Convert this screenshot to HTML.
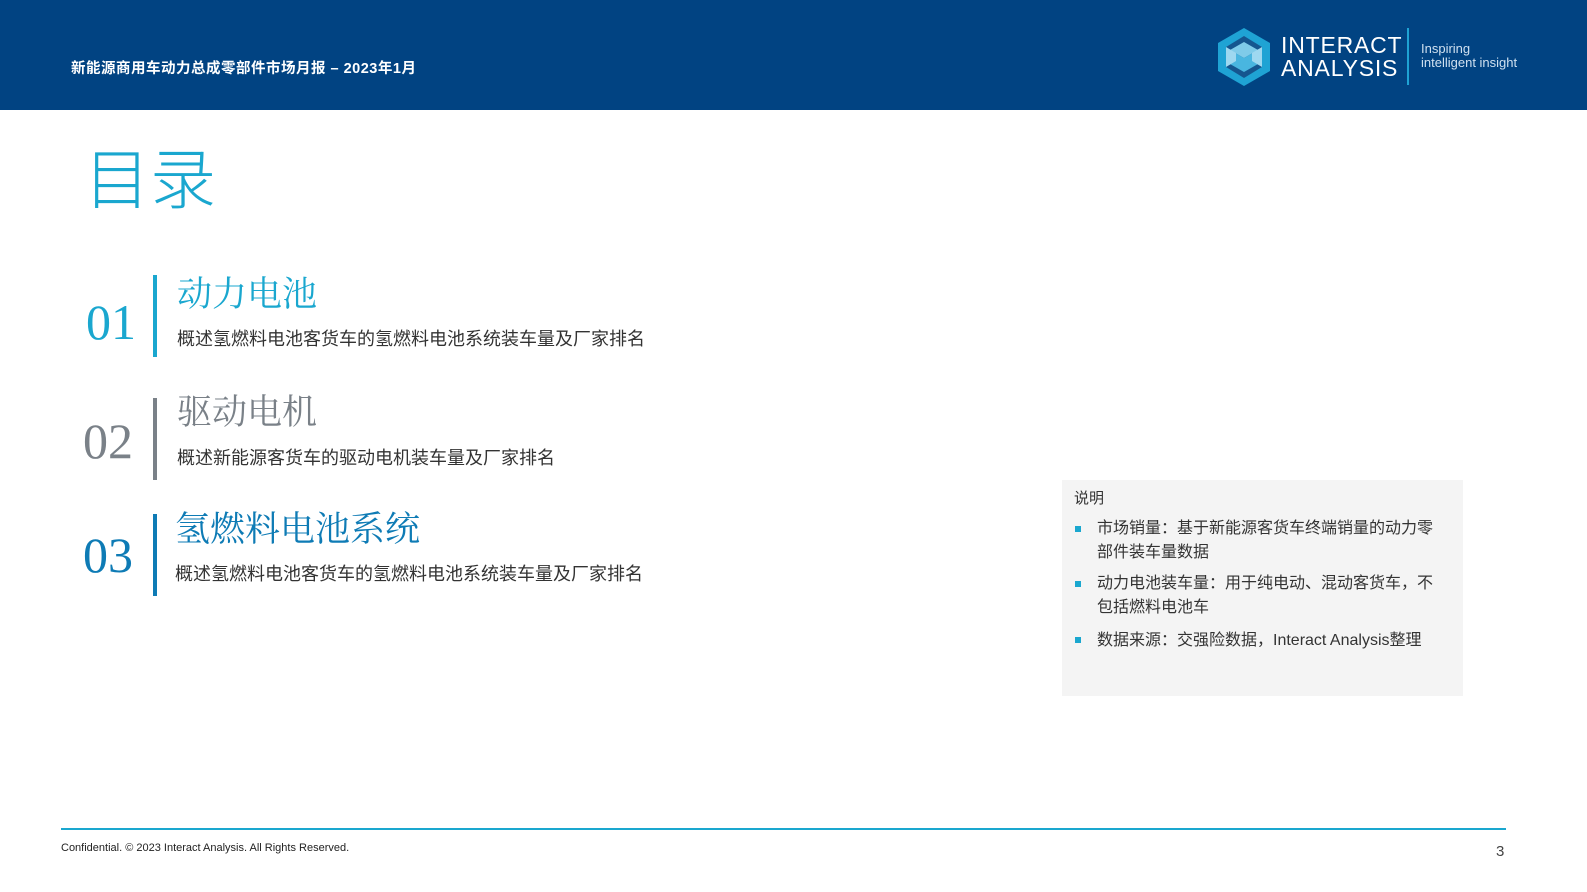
<!DOCTYPE html>
<html><head><meta charset="utf-8"><style>
*{margin:0;padding:0;box-sizing:border-box}
body{width:1587px;height:892px;background:#fff;position:relative;overflow:hidden;font-family:"Liberation Sans","Noto Sans CJK SC",sans-serif}
.hdr{position:absolute;left:0;top:0;width:1587px;height:110px;background:#014382}
.ht{position:absolute;left:71px;top:57px;color:#fff;font-size:14.5px;font-weight:bold;letter-spacing:0.5px}
.abs{position:absolute}
.num{position:absolute;font-family:"Liberation Serif","Noto Serif CJK SC",serif;font-size:50px;line-height:1}
.bar{position:absolute;width:4px;height:82px}
.tt{position:absolute;font-family:"Noto Serif CJK SC",serif;font-size:35px;line-height:1}
.ds{position:absolute;font-size:18px;color:#333;line-height:1}
.note{position:absolute;left:1062px;top:480px;width:401px;height:216px;background:#f4f4f4}
.note p{position:absolute;font-size:16px;color:#333;line-height:24px}
.sq{position:absolute;width:6px;height:6px;background:#1aa7cf}
</style></head><body>
<div class="hdr">
<div class="ht">新能源商用车动力总成零部件市场月报 – 2023年1月</div>
<svg class="abs" style="left:1218px;top:28px" width="52" height="58" viewBox="0 0 52 58">
<polygon points="26,0 52,15 52,43 26,58 0,43 0,15" fill="#1fa3d4"/>
<polygon points="26,8 44,19 44,39 26,50 8,39 8,19" fill="#15568f"/>
<polygon points="26,14 40,22 26,30 12,22" fill="#7fcbe9"/>
<polygon points="26,30 40,22 40,36 26,44 12,36 12,22" fill="#49b6e0"/>
<polygon points="8,19 18,25 18,33 8,39" fill="#9ed8f0"/>
<polygon points="44,19 34,25 34,33 44,39" fill="#9ed8f0"/>
</svg>
<div class="abs" style="left:1281px;top:34px;color:#fff;font-size:23px;line-height:23px;letter-spacing:0.8px">INTERACT<br>ANALYSIS</div>
<div class="abs" style="left:1407px;top:28px;width:2px;height:57px;background:#1fa3d4"></div>
<div class="abs" style="left:1421px;top:42px;color:#cfe0f0;font-size:13px;line-height:14px">Inspiring<br>intelligent insight</div>
</div>
<div class="abs" style="left:84px;top:142px;font-size:66px;color:#1aa7cf;font-family:'Noto Sans CJK SC',sans-serif;font-weight:300;line-height:1">目录</div>

<div class="num" style="left:86px;top:297px;color:#1aa7cf">01</div>
<div class="bar" style="left:153px;top:275px;background:#1aa7cf"></div>
<div class="tt" style="left:177px;top:275px;color:#1aa7cf">动力电池</div>
<div class="ds" style="left:177px;top:330px">概述氢燃料电池客货车的氢燃料电池系统装车量及厂家排名</div>

<div class="num" style="left:83px;top:416px;color:#7a8188">02</div>
<div class="bar" style="left:153px;top:398px;background:#7a8188"></div>
<div class="tt" style="left:177px;top:393px;color:#7a8188">驱动电机</div>
<div class="ds" style="left:177px;top:449px">概述新能源客货车的驱动电机装车量及厂家排名</div>

<div class="num" style="left:83px;top:530px;color:#0e7bb5">03</div>
<div class="bar" style="left:153px;top:514px;background:#0e7bb5"></div>
<div class="tt" style="left:175px;top:510px;color:#0e7bb5">氢燃料电池系统</div>
<div class="ds" style="left:175px;top:565px">概述氢燃料电池客货车的氢燃料电池系统装车量及厂家排名</div>

<div class="note">
<p style="left:12px;top:7px;font-size:15px">说明</p>
<div class="sq" style="left:13px;top:46px"></div>
<p style="left:35px;top:37px">市场销量：基于新能源客货车终端销量的动力零<br>部件装车量数据</p>
<div class="sq" style="left:13px;top:101px"></div>
<p style="left:35px;top:92px">动力电池装车量：用于纯电动、混动客货车，不<br>包括燃料电池车</p>
<div class="sq" style="left:13px;top:157px"></div>
<p style="left:35px;top:149px">数据来源：交强险数据，Interact Analysis整理</p>
</div>

<div class="abs" style="left:61px;top:828px;width:1445px;height:2px;background:#1aa7cf"></div>
<div class="abs" style="left:61px;top:842px;font-size:11px;color:#222">Confidential. © 2023 Interact Analysis. All Rights Reserved.</div>
<div class="abs" style="left:1496px;top:843px;font-size:15px;color:#444">3</div>
</body></html>
